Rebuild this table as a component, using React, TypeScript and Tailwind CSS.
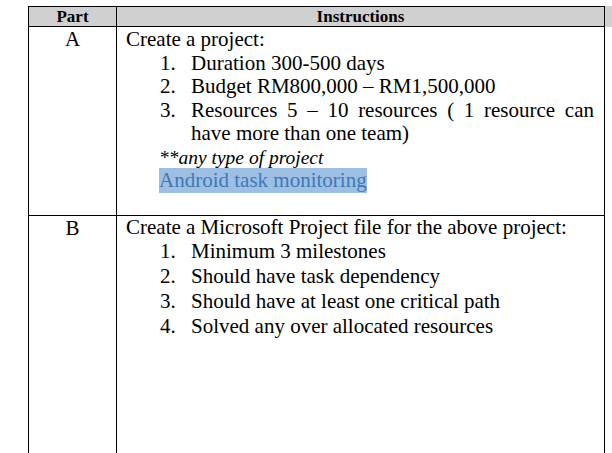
import React from "react";

const serif = "font-['Liberation_Serif','Times_New_Roman',serif]";

function Item({ n, children }: { n: string; children: React.ReactNode }) {
  return (
    <div className="flex">
      <span className="w-[31px] shrink-0">{n}</span>
      <div className="flex-1">{children}</div>
    </div>
  );
}

export default function App() {
  return (
    <div className={`h-[453px] overflow-hidden bg-white pt-[6px] text-black ${serif}`}>
      {/* header */}
      <div className="flex h-[21px] text-[17px] font-bold leading-[19px]">
        <div className="w-[28px]" />
        <div className="w-[88px] border-y border-l border-black bg-[#d0d0d0] text-center">
          Part
        </div>
        <div className="w-[489px] border border-black bg-[#d0d0d0] text-center">
          Instructions
        </div>
        <div className="flex-1 border-t border-b border-[#d0d0d0] bg-[#d0d0d0]" />
      </div>

      {/* row A */}
      <div className="flex h-[189px] text-[21px] leading-[23.5px]">
        <div className="w-[28px]" />
        <div className="w-[88px] border-b border-l border-black pt-[1px] text-center">
          A
        </div>
        <div className="w-[489px] border-x border-b border-black pt-[1px] pl-[9px] pr-[10px]">
          <div>Create a project:</div>
          <div className="pl-[34px]">
            <Item n="1.">Duration 300-500 days</Item>
            <Item n="2.">Budget RM800,000 – RM1,500,000</Item>
            <Item n="3.">
              <span className="block text-justify [text-align-last:justify]">
                Resources 5 – 10 resources ( 1 resource can
              </span>
              <span className="block">have more than one team)</span>
            </Item>
          </div>
          <div className="pl-[33px] text-[19.5px] italic leading-[23.5px]">
            **any type of project
          </div>
          <div className="pl-[33px]">
            <span className="bg-[#9dc0e2] pb-[1px] text-[#3f78b8]">
              Android task monitoring
            </span>
          </div>
        </div>
      </div>

      {/* row B */}
      <div className="flex h-[300px] text-[21px] leading-[23.5px]">
        <div className="w-[28px]" />
        <div className="w-[88px] border-l border-black pt-[1px] text-center">B</div>
        <div className="w-[489px] border-x border-black pt-[1px] pl-[9px] pr-[10px]">
          <div className="leading-[21.5px]">
            Create a Microsoft Project file for the above project:
          </div>
          <div className="pl-[34px] leading-[25px]">
            <Item n="1.">Minimum 3 milestones</Item>
            <Item n="2.">Should have task dependency</Item>
            <Item n="3.">Should have at least one critical path</Item>
            <Item n="4.">Solved any over allocated resources</Item>
          </div>
        </div>
      </div>
    </div>
  );
}
